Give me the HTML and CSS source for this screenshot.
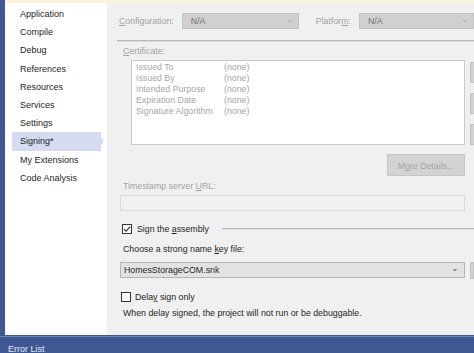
FILE: index.html
```html
<!DOCTYPE html>
<html lang="en">
<head>
    <meta charset="UTF-8">
    <title>Signing</title>
    <link rel="stylesheet" href="styles.css">
</head>
<body>
    <div class="window">
        <div class="edge"></div>
        <div class="frame">
            <div class="topband"></div>
            <div class="panes">
                <!-- Tabs -->
                <ul class="tabs">
                    <li>Application</li>
                    <li>Compile</li>
                    <li>Debug</li>
                    <li>References</li>
                    <li>Resources</li>
                    <li>Services</li>
                    <li>Settings</li>
                    <li class="active">Signing*</li>
                    <li>My Extensions</li>
                    <li>Code Analysis</li>
                </ul>

                <!-- Signing page -->
                <div class="page">
                    <div class="config-row">
                        <span class="dim"><u>C</u>onfiguration:</span>
                        <div class="select config-select"><span>N/A</span><span class="chev">&#8964;</span></div>
                        <span class="dim platform-label">Platfor<u>m</u>:</span>
                        <div class="select platform-select"><span>N/A</span><span class="chev">&#8964;</span></div>
                    </div>
                    <div class="separator"></div>

                    <div class="label dim"><u>C</u>ertificate:</div>
                    <div class="cert-row">
                        <div class="cert-box">
                            <div class="cert-line"><span class="cert-key">Issued To</span><span>(none)</span></div>
                            <div class="cert-line"><span class="cert-key">Issued By</span><span>(none)</span></div>
                            <div class="cert-line"><span class="cert-key">Intended Purpose</span><span>(none)</span></div>
                            <div class="cert-line"><span class="cert-key">Expiration Date</span><span>(none)</span></div>
                            <div class="cert-line"><span class="cert-key">Signature Algorithm</span><span>(none)</span></div>
                        </div>
                        <div class="side-buttons">
                            <div class="side-btn"></div>
                            <div class="side-btn"></div>
                            <div class="side-btn"></div>
                        </div>
                    </div>
                    <div class="details-row">
                        <div class="btn-disabled">M<u>o</u>re Details...</div>
                    </div>

                    <div class="label dim stamp-label">Timestamp server <u>U</u>RL:</div>
                    <div class="textbox"></div>

                    <div class="check-row sign-row">
                        <span class="checkbox">
                            <svg width="10" height="10" viewBox="0 0 10 10"><path d="M2 5.2 L4.1 7.3 L8.2 2.6" fill="none" stroke="#222" stroke-width="1.1"/></svg>
                        </span>
                        <span>Sign the <u>a</u>ssembly</span>
                        <span class="rule"></span>
                    </div>

                    <div class="label choose-label">Choose a strong name <u>k</u>ey file:</div>
                    <div class="combo-row">
                        <div class="combo"><span>HomesStorageCOM.snk</span><span class="chev">&#8964;</span></div>
                        <div class="side-btn combo-btn"></div>
                    </div>

                    <div class="check-row delay-row">
                        <span class="checkbox"></span>
                        <span>Dela<u>y</u> sign only</span>
                    </div>
                    <div class="label note">When delay signed, the project will not run or be debuggable.</div>
                </div>
            </div>
        </div>
    </div>
    <div class="statusbar">Error List</div>
</body>
</html>
```

FILE: styles.css
```css
body {
    margin: 0;
    width: 474px;
    height: 353px;
    overflow: hidden;
    font-family: "Liberation Sans", Arial, sans-serif;
    font-size: 9px;
    color: #1e1e1e;
    background-color: #42578f;
}
u {
    text-decoration: underline;
    text-underline-offset: 1px;
}
.window {
    display: flex;
    height: 335px;
}
.edge {
    width: 5px;
    background-color: #42578f;
}
.frame {
    flex: 1;
    display: flex;
    flex-direction: column;
    min-width: 0;
}
.topband {
    height: 3px;
    background-color: #fbf2dc;
}
.panes {
    flex: 1;
    display: flex;
    min-height: 0;
}
.tabs {
    list-style: none;
    margin: 0;
    padding: 2px 0 0 0;
    width: 102px;
    background-color: #fff;
}
.tabs li {
    position: relative;
    height: 18.2px;
    line-height: 18.2px;
    margin-left: 7px;
    width: 81px;
    padding-left: 8px;
}
.tabs li.active {
    background-color: #d5dcf1;
}
.tabs li.active::after {
    content: "";
    position: absolute;
    right: -3px;
    top: 5px;
    border-left: 3px solid #d5dcf1;
    border-top: 4px solid transparent;
    border-bottom: 4px solid transparent;
}
.page {
    flex: 1;
    min-width: 0;
    overflow: hidden;
    background-color: #f0f0f0;
    padding-left: 12px;
    display: flex;
    flex-direction: column;
    font-size: 8.8px;
}
.dim {
    color: #a3a3a3;
}
.config-row {
    margin-top: 10px;
    height: 16px;
    display: flex;
    align-items: center;
    white-space: nowrap;
}
.select {
    height: 16px;
    box-sizing: border-box;
    border: 1px solid #c4c4c4;
    background-color: #d0d0d0;
    color: #727272;
    display: flex;
    align-items: center;
    justify-content: space-between;
    padding: 0 4px 0 8px;
    flex-shrink: 0;
}
.chev {
    color: #a6a6a6;
    font-size: 9px;
    line-height: 8px;
    margin-top: -4px;
}
.config-select {
    margin-left: 8px;
    width: 117px;
}
.platform-label {
    margin-left: 17px;
}
.platform-select {
    margin-left: 8px;
    width: 115px;
}
.separator {
    margin-top: 11px;
    margin-left: -2px;
    height: 1px;
    border-top: 1px solid #b9b9b9;
    background-color: #dcdcdc;
}
.label {
    height: 11px;
    line-height: 11px;
    padding-left: 4px;
    white-space: nowrap;
}
.separator + .label {
    margin-top: 4px;
}
.cert-row {
    margin-top: 3px;
    margin-left: 12px;
    display: flex;
    gap: 5px;
}
.cert-box {
    width: 334px;
    height: 85px;
    box-sizing: border-box;
    flex-shrink: 0;
    background-color: #fff;
    border: 1px solid #c9c9c9;
    padding: 1px 0 0 4px;
    color: #a6a6a6;
}
.cert-line {
    display: flex;
    height: 11px;
    line-height: 11px;
}
.cert-key {
    width: 88px;
}
.side-buttons {
    display: flex;
    flex-direction: column;
    gap: 10px;
    padding-top: 2px;
}
.side-btn {
    width: 12px;
    height: 21px;
    background-color: #d2d2d2;
    border: 1px solid #c2c2c2;
    box-sizing: border-box;
}
.details-row {
    margin-top: 9px;
    width: 346px;
    display: flex;
    justify-content: flex-end;
}
.btn-disabled {
    width: 78px;
    height: 22px;
    line-height: 22px;
    text-align: center;
    background-color: #d3d3d3;
    border: 1px solid #c6c6c6;
    box-sizing: border-box;
    color: #a5a5a5;
}
.stamp-label {
    margin-top: 5px;
    padding-left: 4px;
}
.textbox {
    margin-top: 3px;
    margin-left: 1px;
    width: 345px;
    height: 16px;
    box-sizing: border-box;
    border: 1px solid #d9d9d9;
    background-color: #f0f0f0;
}
.check-row {
    height: 12px;
    display: flex;
    align-items: center;
    gap: 5px;
    white-space: nowrap;
}
.sign-row {
    margin-top: 12px;
    margin-left: 3px;
}
.delay-row {
    margin-top: 12px;
    margin-left: 2px;
    gap: 4px;
}
.checkbox {
    width: 10px;
    height: 10px;
    box-sizing: border-box;
    border: 1px solid #333;
    background-color: #fff;
    display: flex;
    align-items: center;
    justify-content: center;
    flex-shrink: 0;
}
.checkbox svg {
    display: block;
    margin: -1px;
}
.rule {
    flex: 1;
    height: 1px;
    border-top: 1px solid #b9b9b9;
    background-color: #e2e2e2;
    margin-left: 8px;
}
.choose-label {
    margin-top: 9px;
}
.combo-row {
    margin-top: 7px;
    margin-left: 1px;
    display: flex;
    gap: 5px;
}
.combo {
    width: 345px;
    height: 16px;
    box-sizing: border-box;
    flex-shrink: 0;
    border: 1px solid #b5b5b5;
    background-color: #e2e2e2;
    display: flex;
    align-items: center;
    justify-content: space-between;
    padding: 0 5px 0 3px;
    color: #262626;
}
.combo .chev {
    color: #555;
}
.combo-btn {
    height: 17px;
}
.note {
    margin-top: 5px;
}
.statusbar {
    height: 17px;
    box-sizing: border-box;
    border-top: 1px solid #7488b8;
    background-color: #3f5893;
    color: #e4e9f5;
    padding: 4px 0 0 8px;
    line-height: 16px;
    margin-top: 1px;
}
```
